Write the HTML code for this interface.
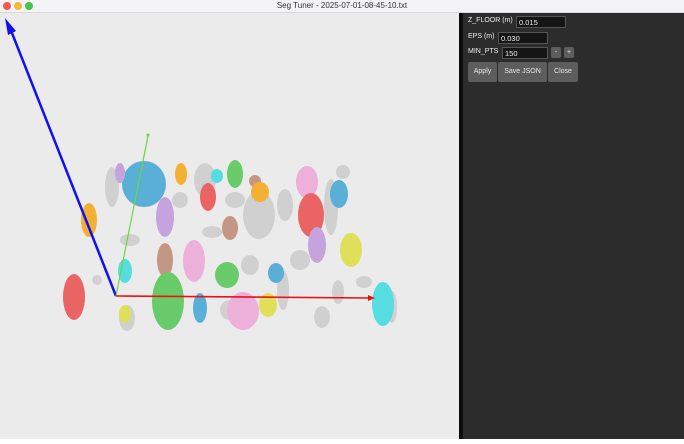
<!DOCTYPE html>
<html><head><style>
html,body{margin:0;padding:0;width:684px;height:439px;overflow:hidden;font-family:"Liberation Sans",sans-serif}
.tb{position:absolute;left:0;top:0;width:684px;height:12px;background:#f3f3f5;border-bottom:1px solid #d8d8d8;text-align:center;font-size:8px;line-height:12px;color:#333}
.dot{position:absolute;top:2px;width:8px;height:8px;border-radius:50%}
.cv{position:absolute;left:0;top:13px;width:459px;height:426px;background:#ebebeb}
.bd{position:absolute;left:459px;top:13px;width:4px;height:426px;background:#0c0c0c}
.pn{position:absolute;left:463px;top:13px;width:221px;height:426px;background:#2c2c2c;color:#eee;font-size:7px}
.lb{position:absolute}
.in{position:absolute;background:#151515;border:1px solid #555;height:12px;color:#eee;font-size:7.5px;line-height:11px;padding-left:2px;box-sizing:border-box}
.bt{position:absolute;background:#5d5d5d;color:#e8e8e8;font-size:7px;text-align:center;border-radius:2px}
</style></head><body>
<div class="tb"><div class="dot" style="left:3px;background:#f25a52"></div><div class="dot" style="left:14px;background:#f5b93a"></div><div class="dot" style="left:25px;background:#3fc54a"></div>Seg Tuner - 2025-07-01-08-45-10.txt</div>
<div class="cv"><svg width="459" height="426" viewBox="0 13 459 426">
<g fill="#c8c8c8" opacity="0.75">
<ellipse cx="112" cy="187" rx="7" ry="20"/><ellipse cx="259" cy="215" rx="16" ry="24"/><ellipse cx="212" cy="232" rx="10" ry="6"/><ellipse cx="235" cy="200" rx="10" ry="8"/><ellipse cx="331" cy="207" rx="7" ry="28"/><ellipse cx="343" cy="172" rx="7" ry="7"/><ellipse cx="283" cy="290" rx="6" ry="20"/><ellipse cx="97" cy="280" rx="5" ry="5"/><ellipse cx="127" cy="318" rx="8" ry="13"/><ellipse cx="322" cy="317" rx="8" ry="11"/><ellipse cx="338" cy="292" rx="6" ry="12"/><ellipse cx="364" cy="282" rx="8" ry="6"/><ellipse cx="392" cy="307" rx="5" ry="16"/><ellipse cx="205" cy="180" rx="11" ry="17"/><ellipse cx="285" cy="205" rx="8" ry="16"/><ellipse cx="250" cy="265" rx="9" ry="10"/><ellipse cx="130" cy="240" rx="10" ry="6"/><ellipse cx="300" cy="260" rx="10" ry="10"/><ellipse cx="230" cy="310" rx="10" ry="10"/><ellipse cx="180" cy="200" rx="8" ry="8"/></g>
<ellipse cx="144" cy="184" rx="22" ry="23" fill="#5aafd6"/>
<ellipse cx="120" cy="173" rx="5" ry="10" fill="#c7a3dd"/>
<ellipse cx="181" cy="174" rx="6" ry="11" fill="#f3b134"/>
<ellipse cx="89" cy="220" rx="8" ry="17" fill="#f3b134"/>
<ellipse cx="165" cy="217" rx="9" ry="20" fill="#c7a3dd"/>
<ellipse cx="217" cy="176" rx="6" ry="7" fill="#55dde0"/>
<ellipse cx="235" cy="174" rx="8" ry="14" fill="#6acb6a"/>
<ellipse cx="208" cy="197" rx="8" ry="14" fill="#ea6464"/>
<ellipse cx="255" cy="181" rx="6" ry="6" fill="#c49684"/>
<ellipse cx="260" cy="192" rx="9" ry="10" fill="#f3b134"/>
<ellipse cx="230" cy="228" rx="8" ry="12" fill="#c49684"/>
<ellipse cx="307" cy="182" rx="11" ry="16" fill="#ecb0da"/>
<ellipse cx="311" cy="215" rx="13" ry="22" fill="#ea6464"/>
<ellipse cx="317" cy="245" rx="9" ry="18" fill="#c7a3dd"/>
<ellipse cx="339" cy="194" rx="9" ry="14" fill="#5aafd6"/>
<ellipse cx="351" cy="250" rx="11" ry="17" fill="#e0df5a"/>
<ellipse cx="125" cy="271" rx="7" ry="12" fill="#55dde0"/>
<ellipse cx="165" cy="260" rx="8" ry="17" fill="#c49684"/>
<ellipse cx="194" cy="261" rx="11" ry="21" fill="#ecb0da"/>
<ellipse cx="227" cy="275" rx="12" ry="13" fill="#6acb6a"/>
<ellipse cx="276" cy="273" rx="8" ry="10" fill="#5aafd6"/>
<ellipse cx="74" cy="297" rx="11" ry="23" fill="#ea6464"/>
<ellipse cx="125" cy="314" rx="6" ry="9" fill="#e0df5a"/>
<ellipse cx="168" cy="301" rx="16" ry="29" fill="#6acb6a"/>
<ellipse cx="200" cy="308" rx="7" ry="15" fill="#5aafd6"/>
<ellipse cx="243" cy="311" rx="16" ry="19" fill="#ecb0da"/>
<ellipse cx="268" cy="305" rx="9" ry="12" fill="#e0df5a"/>
<ellipse cx="383" cy="304" rx="11" ry="22" fill="#55dde0"/>
<line x1="116" y1="296" x2="10" y2="28" stroke="#1010f0" stroke-width="2.5"/>
<polygon points="5,18 16,31 8,35" fill="#1010f0"/>
<line x1="116" y1="296" x2="148" y2="136" stroke="#6ad838" stroke-width="1.2"/>
<circle cx="148" cy="135" r="1.5" fill="#6ad838"/>
<line x1="116" y1="296" x2="370" y2="298" stroke="#f01010" stroke-width="1.6"/>
<polygon points="375,298 368,295 368,301" fill="#f01010"/>
</svg></div>
<div class="bd"></div>
<div class="pn">
<div class="lb" style="left:5px;top:4px">Z_FLOOR (m)</div><div class="in" style="left:53px;top:3px;width:50px">0.015</div>
<div class="lb" style="left:5px;top:20px">EPS (m)</div><div class="in" style="left:35px;top:19px;width:50px">0.030</div>
<div class="lb" style="left:5px;top:35px">MIN_PTS</div><div class="in" style="left:39px;top:34px;width:46px">150</div>
<div class="bt" style="left:88px;top:34px;width:10px;height:11px;line-height:11px">-</div>
<div class="bt" style="left:101px;top:34px;width:10px;height:11px;line-height:11px">+</div>
<div class="bt" style="left:5px;top:49px;width:29px;height:20px;line-height:20px">Apply</div>
<div class="bt" style="left:35px;top:49px;width:49px;height:20px;line-height:20px">Save JSON</div>
<div class="bt" style="left:85px;top:49px;width:30px;height:20px;line-height:20px">Close</div>
</div>
</body></html>
